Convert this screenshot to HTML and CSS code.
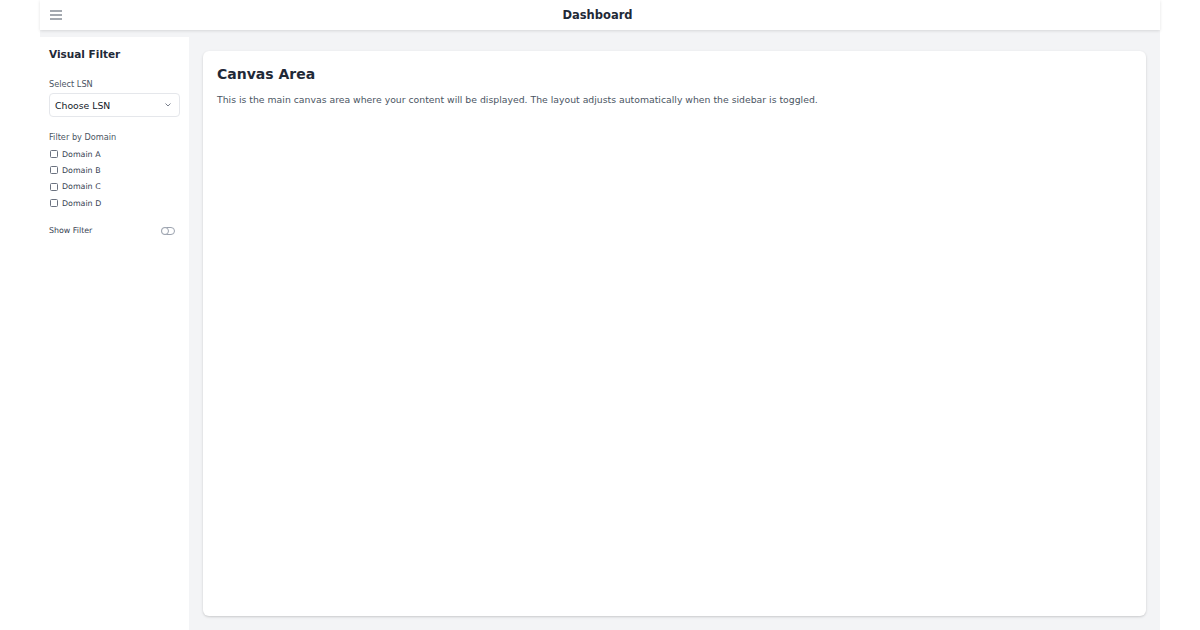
FILE: index.html
```html
<!DOCTYPE html>
<html lang="en">
  <head>
    <meta charset="UTF-8" />
    <meta name="viewport" content="width=device-width, initial-scale=1.0" />
    <title>Dashboard</title>
    <link rel="stylesheet" href="styles.css">
  </head>
  <body>
    <div class="app">
      <header class="topbar">
        <button class="menu-button" aria-label="Toggle sidebar">
          <svg width="12" height="10" viewBox="0 0 12 10">
            <path d="M0 1h12M0 5h12M0 9h12" stroke="#4b5563" stroke-width="1.2" fill="none" />
          </svg>
        </button>
        <h1>Dashboard</h1>
      </header>

      <div class="layout">
        <aside class="sidebar">
          <h2>Visual Filter</h2>

          <div class="field">
            <label class="field-label" for="lsn">Select LSN</label>
            <div class="select-box">
              <span>Choose LSN</span>
              <svg width="6" height="4" viewBox="0 0 6 4">
                <path d="M0.5 0.5l2.5 2.5l2.5-2.5" stroke="#6b7280" stroke-width="0.9" fill="none" />
              </svg>
            </div>
          </div>

          <div class="field">
            <p class="field-label">Filter by Domain</p>
            <label class="check"><span class="box"></span>Domain A</label>
            <label class="check"><span class="box"></span>Domain B</label>
            <label class="check"><span class="box"></span>Domain C</label>
            <label class="check"><span class="box"></span>Domain D</label>
          </div>

          <div class="toggle-row">
            <span>Show Filter</span>
            <span class="toggle"><span class="knob"></span></span>
          </div>
        </aside>

        <main class="main">
          <section class="card">
            <h2>Canvas Area</h2>
            <p>This is the main canvas area where your content will be displayed. The layout adjusts automatically when the sidebar is toggled.</p>
          </section>
        </main>
      </div>
    </div>
  </body>
</html>
```

FILE: styles.css
```css
body {
  margin: 0;
  padding: 0;
  background-color: #ffffff;
  font-family: "DejaVu Sans", "Liberation Sans", sans-serif;
  color: #1f2937;
}
.app {
  width: 1120px;
  margin: 0 auto;
  height: 630px;
  display: flex;
  flex-direction: column;
}
.topbar {
  position: relative;
  z-index: 1;
  height: 30px;
  flex-shrink: 0;
  display: flex;
  align-items: center;
  justify-content: center;
  padding-right: 5px;
  background-color: #ffffff;
  box-shadow: 0 1px 3px rgba(0, 0, 0, 0.12);
}
.menu-button {
  position: absolute;
  left: 10px;
  top: 10px;
  padding: 0;
  border: none;
  background: none;
  display: flex;
}
.topbar h1 {
  margin: 0;
  font-size: 11.5px;
  font-weight: bold;
  color: #1f2937;
}
.layout {
  flex: 1;
  display: flex;
  padding-top: 7px;
  background-color: #f3f4f6;
}
.sidebar {
  width: 149px;
  flex-shrink: 0;
  box-sizing: border-box;
  padding: 11px 9px;
  background-color: #ffffff;
}
.sidebar h2 {
  margin: 0 0 19px;
  font-size: 10.5px;
  font-weight: bold;
  color: #1f2937;
}
.field {
  margin-bottom: 15px;
}
.field-label {
  display: block;
  margin: 0 0 4px;
  font-size: 8.2px;
  color: #4b5563;
}
.select-box {
  height: 24px;
  box-sizing: border-box;
  border: 1px solid #e5e7eb;
  border-radius: 4px;
  padding: 0 8px 0 5px;
  display: flex;
  align-items: center;
  justify-content: space-between;
  font-size: 9.3px;
  color: #111827;
}
.check {
  display: flex;
  align-items: center;
  height: 16.3px;
  padding-left: 1px;
  font-size: 7.9px;
  color: #374151;
}
.box {
  width: 6px;
  height: 6px;
  margin-right: 4px;
  border: 1px solid #6b7280;
  border-radius: 1.5px;
}
.toggle-row {
  display: flex;
  align-items: center;
  justify-content: space-between;
  padding-right: 5px;
  font-size: 7.9px;
  color: #374151;
}
.toggle {
  width: 14px;
  height: 8px;
  box-sizing: border-box;
  border: 1px solid #9ca3af;
  border-radius: 4px;
  display: flex;
  align-items: center;
}
.knob {
  width: 8px;
  height: 8px;
  margin-left: -1px;
  box-sizing: border-box;
  border: 1px solid #9ca3af;
  border-radius: 50%;
  background-color: #ffffff;
}
.main {
  flex: 1;
  display: flex;
  padding: 14px;
}
.card {
  flex: 1;
  box-sizing: border-box;
  padding: 15px 14px;
  background-color: #ffffff;
  border-radius: 6px;
  box-shadow: 0 1px 3px rgba(0, 0, 0, 0.12), 0 1px 2px rgba(0, 0, 0, 0.06);
}
.card h2 {
  margin: 0 0 12px;
  font-size: 14px;
  font-weight: bold;
  color: #1f2937;
}
.card p {
  margin: 0;
  font-size: 9.3px;
  color: #4b5563;
}
```
